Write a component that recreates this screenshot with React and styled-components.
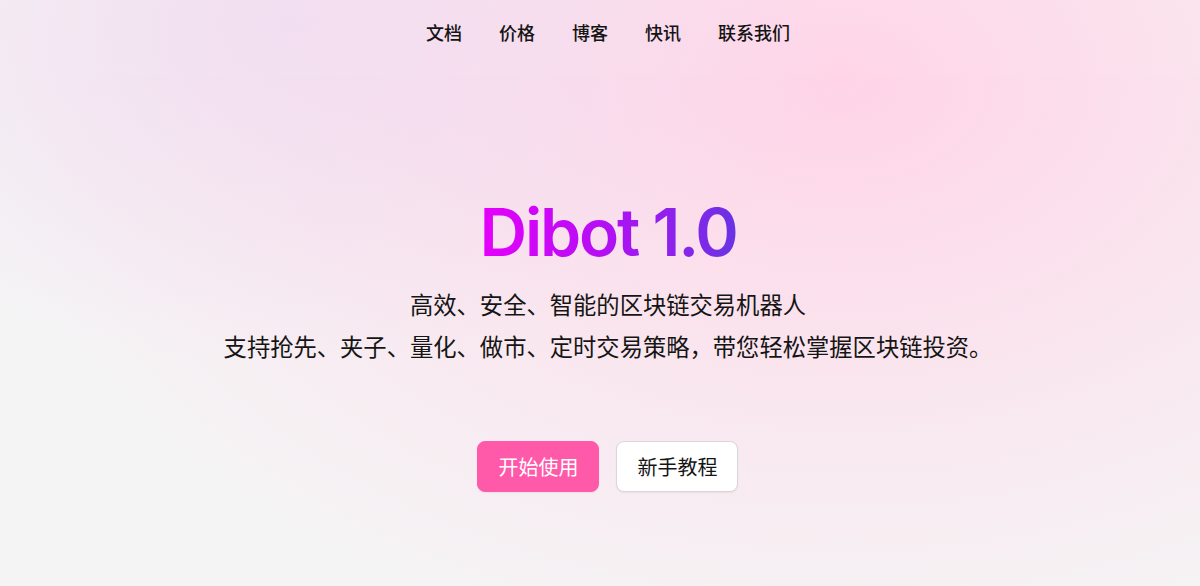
import styled, { createGlobalStyle } from "styled-components";

const GlobalStyle = createGlobalStyle`
	html, body {
		margin: 0;
		padding: 0;
	}
	body {
		font-family: "Inter", "Noto Sans CJK SC", sans-serif;
		color: #111;
		background: #f5f4f5;
	}
`;

const Page = styled.div`
	min-height: 586px;
	display: flex;
	flex-direction: column;
	align-items: center;
	padding-left: 16px;
	box-sizing: border-box;
	background:
		radial-gradient(ellipse 560px 340px at 24% 4%, rgba(238, 214, 240, 0.65), rgba(238, 214, 240, 0) 100%),
		radial-gradient(ellipse 860px 580px at 70% 14%, rgba(255, 212, 232, 1), rgba(252, 222, 235, 0.6) 55%, rgba(245, 244, 245, 0) 100%),
		#f5f4f5;
`;

const Header = styled.header`
	align-self: stretch;
	margin-left: -16px;
	display: flex;
	justify-content: center;
	padding-left: 16px;
	height: 76px;
	background: rgba(255, 255, 255, 0.04);
`;

const Nav = styled.nav`
	display: flex;
	gap: 37px;
	padding-top: 23px;
	a {
		font-size: 18px;
		font-weight: 500;
		color: #141414;
		text-decoration: none;
		line-height: 22px;
	}
`;

const Hero = styled.section`
	display: flex;
	flex-direction: column;
	align-items: center;
	padding-top: 118px;
`;

const Title = styled.h1`
	margin: 0;
	font-size: 66px;
	font-weight: 600;
	line-height: 76px;
	letter-spacing: -2.2px;
	background: linear-gradient(90deg, #e600fb 0%, #b80df5 45%, #6a33e4 100%);
	-webkit-background-clip: text;
	background-clip: text;
	color: transparent;
`;

const Tagline = styled.p`
	margin: 15px 0 0;
	font-size: 23.3px;
	line-height: 42px;
	color: #151515;
	text-align: center;
`;

const Actions = styled.div`
	display: flex;
	gap: 17px;
	margin-top: 72px;
`;

const Button = styled.button`
	height: 51px;
	padding: 0 20px;
	font-family: inherit;
	font-size: 20px;
	border-radius: 8px;
	cursor: pointer;
	border: 1px solid ${(p) => (p.$primary ? "#ff5aa9" : "#d9d6d9")};
	background: ${(p) => (p.$primary ? "#ff5aa9" : "#ffffff")};
	color: ${(p) => (p.$primary ? "#ffffff" : "#151515")};
	box-shadow: 0 1px 2px rgba(0, 0, 0, 0.06);
`;

function App() {
	return (
		<Page>
			<GlobalStyle />
			<Header>
				<Nav>
					<a href="#">文档</a>
					<a href="#">价格</a>
					<a href="#">博客</a>
					<a href="#">快讯</a>
					<a href="#">联系我们</a>
				</Nav>
			</Header>
			<Hero>
				<Title>Dibot 1.0</Title>
				<Tagline>
					高效、安全、智能的区块链交易机器人
					<br />
					支持抢先、夹子、量化、做市、定时交易策略，带您轻松掌握区块链投资。
				</Tagline>
				<Actions>
					<Button $primary>开始使用</Button>
					<Button>新手教程</Button>
				</Actions>
			</Hero>
		</Page>
	);
}

export default App;
